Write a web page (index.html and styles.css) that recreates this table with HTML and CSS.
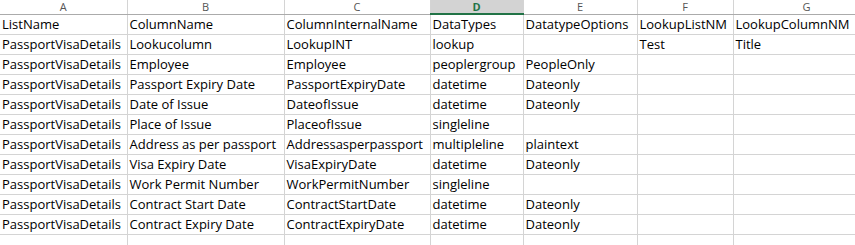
FILE: index.html
```html
<!DOCTYPE html>
<html>
<head>
<meta charset="utf-8">
<link rel="stylesheet" href="styles.css">
</head>
<body>
<div class="frame">
<table class="sheet">
<colgroup>
<col class="ca"><col class="cb"><col class="cc"><col class="cd"><col class="ce"><col class="cf"><col class="cg">
</colgroup>
<thead>
<tr class="hdr"><th>A</th><th>B</th><th>C</th><th class="sel">D</th><th>E</th><th>F</th><th>G</th></tr>
</thead>
<tbody>
<tr><td>ListName</td><td>ColumnName</td><td>ColumnInternalName</td><td>DataTypes</td><td>DatatypeOptions</td><td>LookupListNM</td><td>LookupColumnNM</td></tr>
<tr><td>PassportVisaDetails</td><td>Lookucolumn</td><td>LookupINT</td><td>lookup</td><td></td><td>Test</td><td>Title</td></tr>
<tr><td>PassportVisaDetails</td><td>Employee</td><td>Employee</td><td>peoplergroup</td><td>PeopleOnly</td><td></td><td></td></tr>
<tr><td>PassportVisaDetails</td><td>Passport Expiry Date</td><td>PassportExpiryDate</td><td>datetime</td><td>Dateonly</td><td></td><td></td></tr>
<tr><td>PassportVisaDetails</td><td>Date of Issue</td><td>DateofIssue</td><td>datetime</td><td>Dateonly</td><td></td><td></td></tr>
<tr><td>PassportVisaDetails</td><td>Place of Issue</td><td>PlaceofIssue</td><td>singleline</td><td></td><td></td><td></td></tr>
<tr><td>PassportVisaDetails</td><td>Address as per passport</td><td>Addressasperpassport</td><td>multipleline</td><td>plaintext</td><td></td><td></td></tr>
<tr><td>PassportVisaDetails</td><td>Visa Expiry Date</td><td>VisaExpiryDate</td><td>datetime</td><td>Dateonly</td><td></td><td></td></tr>
<tr><td>PassportVisaDetails</td><td>Work Permit Number</td><td>WorkPermitNumber</td><td>singleline</td><td></td><td></td><td></td></tr>
<tr><td>PassportVisaDetails</td><td>Contract Start Date</td><td>ContractStartDate</td><td>datetime</td><td>Dateonly</td><td></td><td></td></tr>
<tr><td>PassportVisaDetails</td><td>Contract Expiry Date</td><td>ContractExpiryDate</td><td>datetime</td><td>Dateonly</td><td></td><td></td></tr>
<tr><td></td><td></td><td></td><td></td><td></td><td></td><td></td></tr>
</tbody>
</table>
</div>
</body>
</html>
```
FILE: styles.css
```css
html, body {
  margin: 0;
  padding: 0;
  background: #fff;
  overflow: hidden;
}
.frame {
  width: 855px;
  height: 245px;
  overflow: hidden;
}
.sheet {
  border-collapse: collapse;
  table-layout: fixed;
  width: 880px;
  font-family: "Open Sans", "Liberation Sans", sans-serif;
  font-size: 13px;
  color: #000;
}
.ca { width: 127px; }
.cb { width: 157px; }
.cc { width: 146px; }
.cd { width: 93px; }
.ce { width: 114px; }
.cf { width: 96px; }
.cg { width: 147px; }
.hdr th {
  height: 12px;
  padding: 1px 0 0;
  font-weight: normal;
  font-size: 11px;
  line-height: 12px;
  color: #555;
  background: #fff;
  border-right: 1px solid #d4d4d4;
  border-bottom: 1px solid #ababab;
  text-align: center;
  vertical-align: top;
}
.hdr th.sel {
  background: #d3d3d3;
  color: #217346;
  font-weight: bold;
  border-bottom: 2px solid #217346;
}
td {
  height: 19px;
  padding: 0 0 0 2px;
  border-right: 1px solid #d4d4d4;
  border-bottom: 1px solid #d4d4d4;
  white-space: nowrap;
  overflow: hidden;
  line-height: 19px;
  vertical-align: bottom;
}
```
